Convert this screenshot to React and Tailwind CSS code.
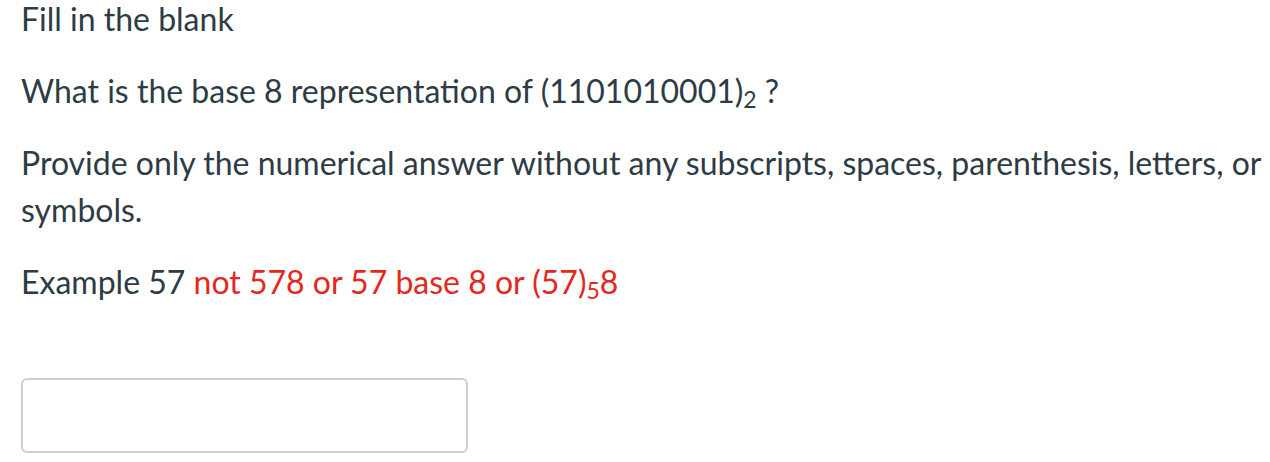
import React from "react";

export default function App() {
  return (
    <div
      className="bg-white text-[#2d3b45] text-[32px] leading-[47px] pl-[21px] pr-2 min-h-[462px]"
      style={{ fontFamily: "Lato, 'Open Sans', sans-serif" }}
    >
      <p className="-mt-[5px]">Fill in the blank</p>
      <p className="mt-[25px]">
        What is the base 8 representation of (1101010001)
        <span className="text-[23px] align-[-5px] leading-none">2</span> ?
      </p>
      <p className="mt-[25px]">
        Provide only the numerical answer without any subscripts, spaces, parenthesis, letters, or symbols.
      </p>
      <p className="mt-[25px]">
        Example 57{" "}
        <span className="text-[#e3281e]">
          not 578 or 57 base 8 or (57)
          <span className="text-[23px] align-[-5px] leading-none">5</span>8
        </span>
      </p>
      <div className="mt-[73px] w-[447px] h-[75px] rounded-[6px] border-2 border-[#cbd0d3] bg-white" />
    </div>
  );
}
